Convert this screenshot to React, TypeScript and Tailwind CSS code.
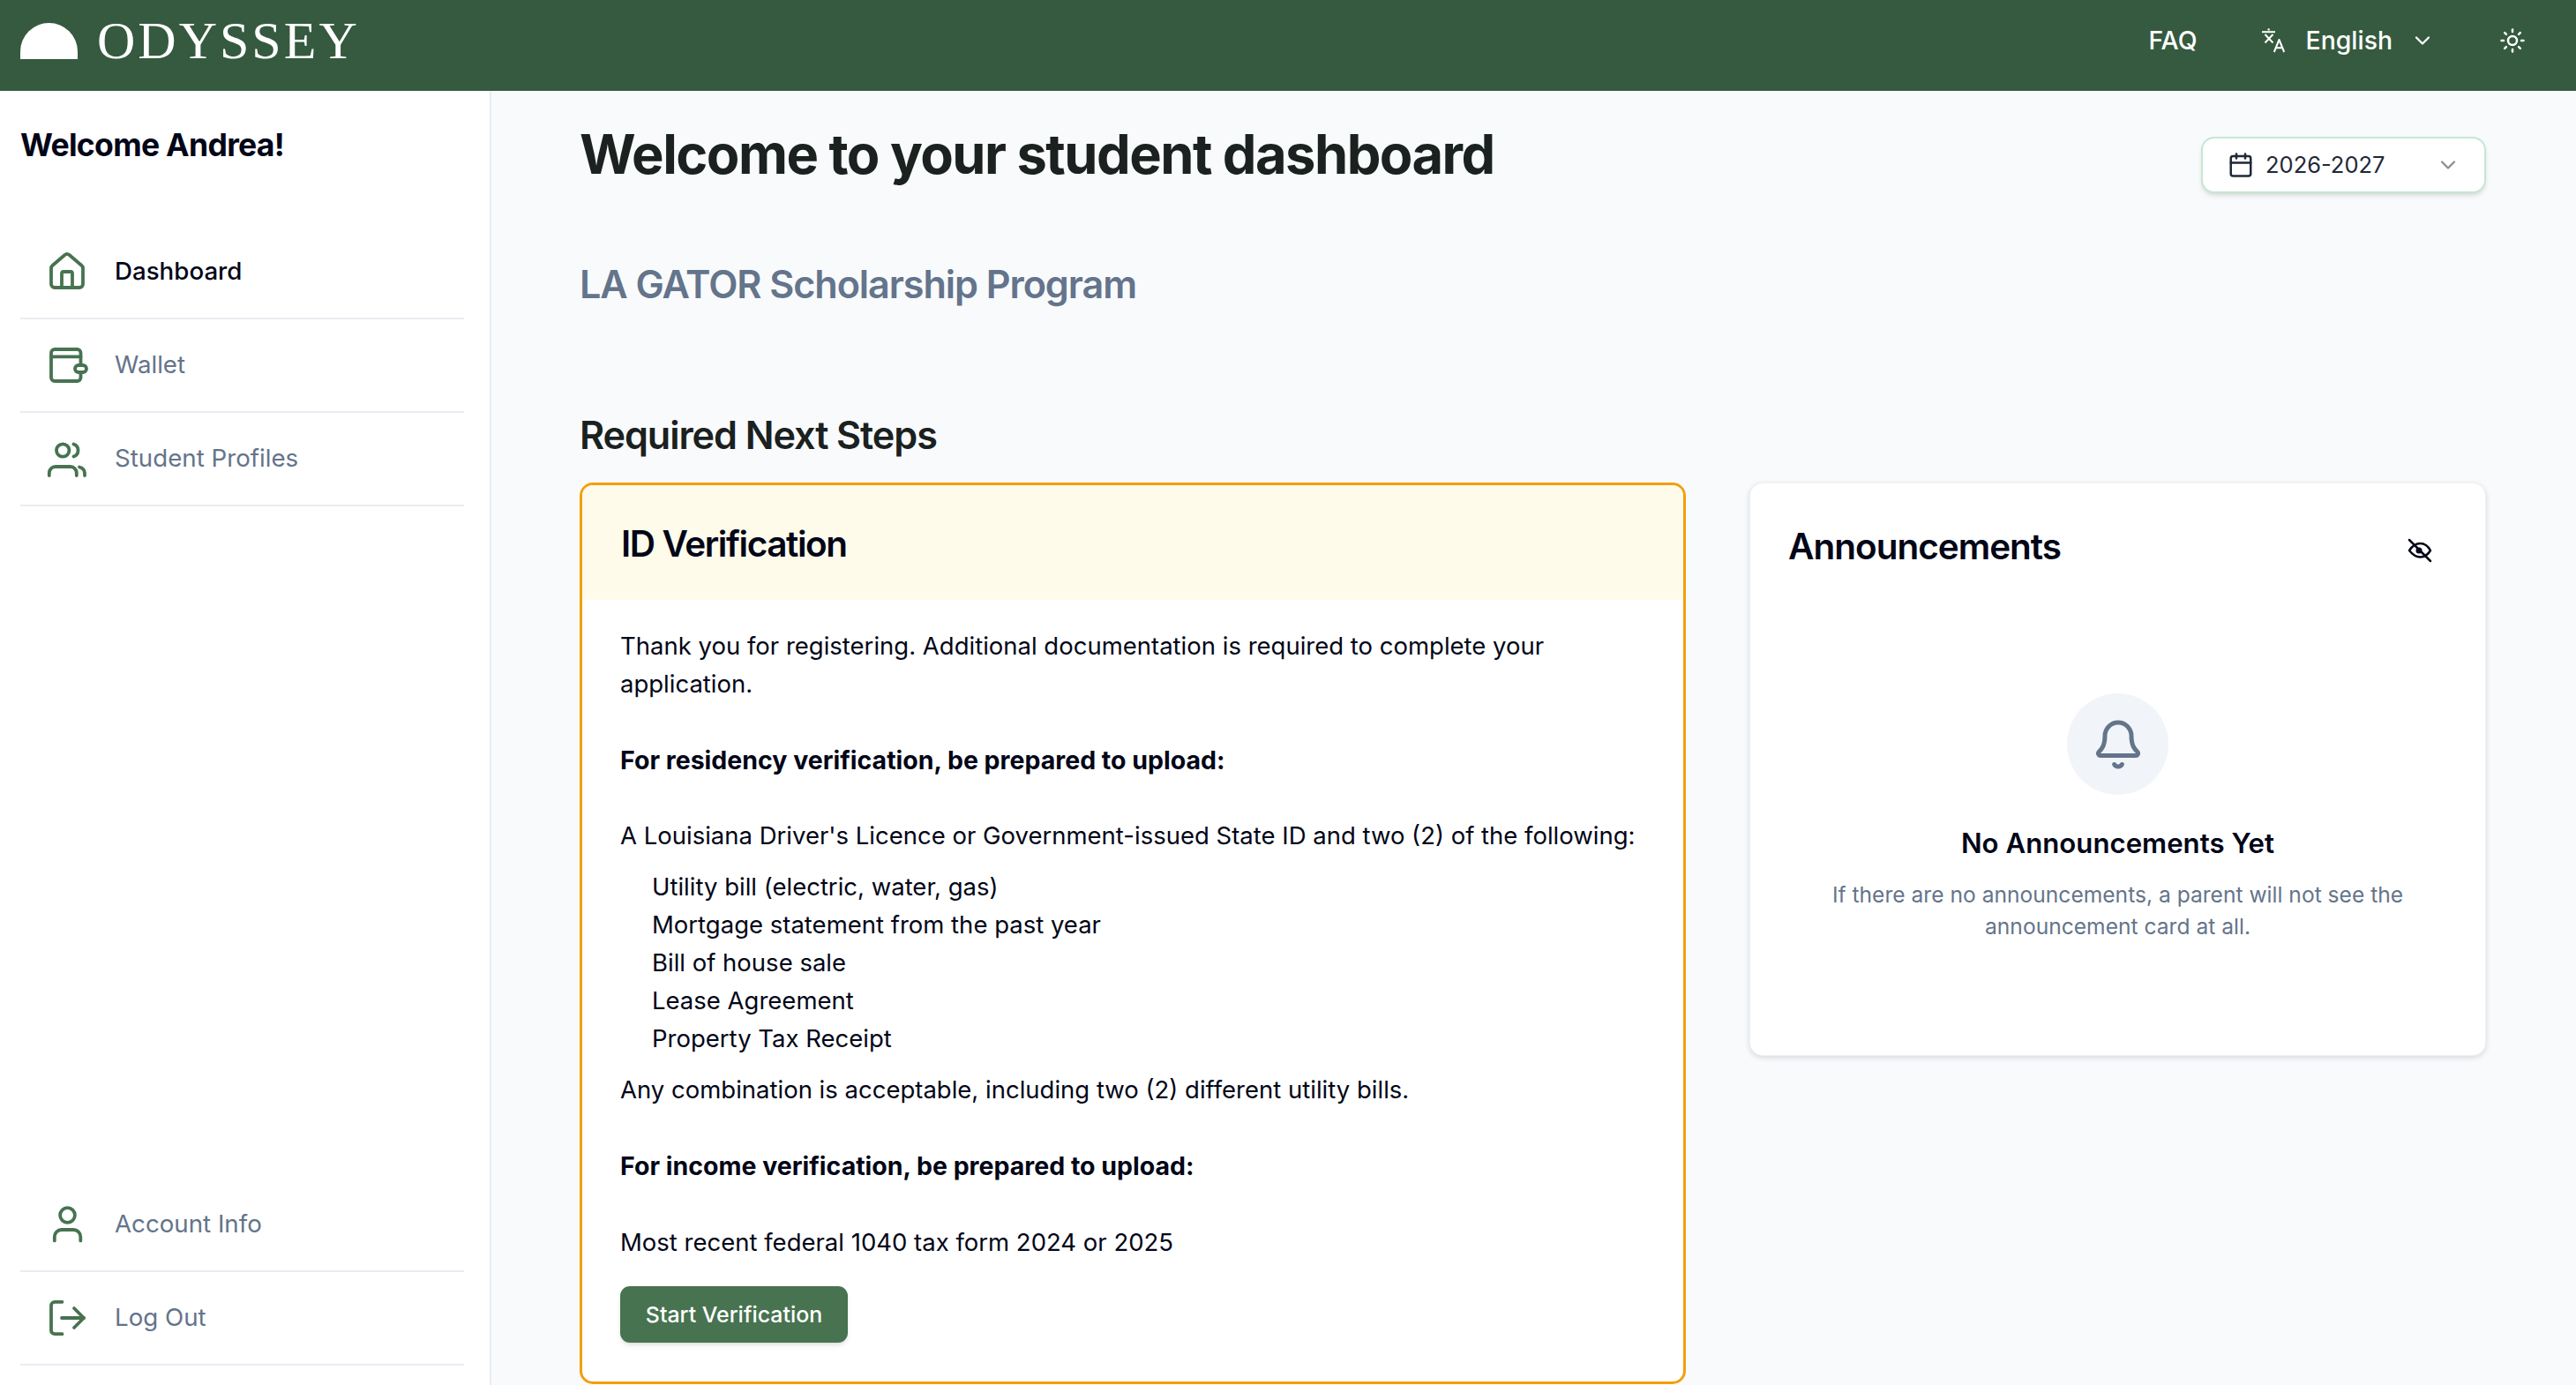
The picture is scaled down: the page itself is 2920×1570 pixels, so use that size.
import React from 'react';
import { House, Calendar, ChevronDown, Sun, Bell } from 'lucide-react';

const iconProps = {
  width: 48,
  height: 48,
  viewBox: '0 0 48 48',
  fill: 'none',
  stroke: '#477350',
  strokeWidth: 3.8,
  strokeLinecap: 'round' as const,
  strokeLinejoin: 'round' as const,
};

const WalletIcon = () => (
  <svg {...iconProps}>
    <path d="M39.5 23V10a4 4 0 0 0-4-4H10a4 4 0 0 0-4 4v28a4 4 0 0 0 4 4h25.5a4 4 0 0 0 4-4v-5" />
    <path d="M6 14.4h33.5" />
    <rect x="33" y="24" width="13" height="8" rx="4" />
  </svg>
);

const UsersIcon = () => (
  <svg {...iconProps}>
    <circle cx="19.2" cy="14.5" r="7.2" />
    <path d="M3.8 43v-3a7 7 0 0 1 7-7h17a7 7 0 0 1 7 7v3" />
    <path d="M31.5 7.5c3 1 5 4 5 7s-2 6-5 7" />
    <path d="M38 33.5c3 .8 6 3 6 7v2.5" />
  </svg>
);

const UserIcon = () => (
  <svg {...iconProps}>
    <circle cx="24.5" cy="13.5" r="8.4" />
    <path d="M9.8 42.4V38a8 8 0 0 1 8-8h13.5a8 8 0 0 1 8 8v4.4" />
  </svg>
);

const LogOutIcon = () => (
  <svg {...iconProps}>
    <path d="M18.5 5.8H10a4 4 0 0 0-4 4v28.4a4 4 0 0 0 4 4h8.5" />
    <path d="M18 24h25" />
    <path d="M32 13l11 11-11 11" />
  </svg>
);

const TranslateIcon = () => (
  <svg width="28" height="28" viewBox="0 0 28 28" fill="none" stroke="#fff" strokeWidth="2" strokeLinejoin="round">
    <path d="M1 4.2h15" />
    <circle cx="8.7" cy="1.4" r="1.2" fill="#fff" stroke="none" />
    <path d="M4.5 7l9 9.5M13.5 7l-9 9.5" />
    <path d="M14.8 27l5.7-14 5.7 14M16.8 22.3h7.4" />
  </svg>
);

const EyeHiddenIcon = () => (
  <svg width="28" height="28" viewBox="0 0 28 28" fill="none" stroke="#020617" strokeWidth="2.5" strokeLinecap="round" strokeLinejoin="round">
    <path d="M2 14C6 8 10 6 14.5 6S23 8.5 26 14c-3 5-7 7.5-11.5 7.5S6 19 2 14Z" />
    <circle cx="13" cy="14" r="3.5" fill="#020617" stroke="none" />
    <path d="M2 2l24 24" />
  </svg>
);

const NavRow = ({ icon, label, active }: { icon: React.ReactNode; label: string; active?: boolean }) => (
  <div className="flex items-center h-[106px] border-b-2 border-[#e8edf3] pl-[29px]">
    <div className="w-[48px] h-[48px] shrink-0">{icon}</div>
    <span className={`ml-[30px] text-[27.7px] ${active ? 'font-medium text-[#020617]' : 'text-[#64748b]'}`}>{label}</span>
  </div>
);

const Steps = () => (
  <div className="w-[1254px] h-[1022px] shrink-0 bg-white border-[3px] border-[#f59e0b] rounded-[15px] overflow-hidden">
    <div className="h-[130px] bg-[#fffbeb] pl-[44px] pt-[5px] flex items-center">
      <h3 className="text-[40.5px] font-semibold tracking-[-0.035em] text-[#020617]">ID Verification</h3>
    </div>
    <div className="px-[43px] pt-[31px] text-[27.5px] leading-[43px] text-[#020617]">
      <p className="mb-[43px]">
        Thank you for registering. Additional documentation is required to complete your application.
      </p>
      <p className="mb-[43px] text-[28.5px] font-bold">For residency verification, be prepared to upload:</p>
      <p className="mb-[15px]">A Louisiana Driver's Licence or Government-issued State ID and two (2) of the following:</p>
      <ul className="pl-[36px] mb-[15px]">
        <li>Utility bill (electric, water, gas)</li>
        <li>Mortgage statement from the past year</li>
        <li>Bill of house sale</li>
        <li>Lease Agreement</li>
        <li>Property Tax Receipt</li>
      </ul>
      <p className="mb-[43px]">Any combination is acceptable, including two (2) different utility bills.</p>
      <p className="mb-[44px] text-[28.5px] font-bold">For income verification, be prepared to upload:</p>
      <p className="mb-[28px]">Most recent federal 1040 tax form 2024 or 2025</p>
      <button className="w-[258px] h-[64px] bg-[#477350] text-white text-[24.9px] font-medium rounded-[11px] shadow-md">
        Start Verification
      </button>
    </div>
  </div>
);

const Announcements = () => (
  <div className="w-[835px] h-[650px] shrink-0 bg-white rounded-[15px] shadow-[0_2px_6px_rgba(15,23,42,0.14)] border border-[#eef2f6] px-[43px]">
    <div className="flex items-center justify-between pt-[44px] pr-[17px]">
      <h3 className="text-[40.5px] leading-[56px] font-semibold tracking-[-0.025em] text-[#020617]">Announcements</h3>
      <span className="mt-[8px]"><EyeHiddenIcon /></span>
    </div>
    <div className="flex flex-col items-center mt-[138px]">
      <div className="w-[115px] h-[115px] rounded-full bg-[#f1f5f9] flex items-center justify-center">
        <Bell size={60} color="#64748b" strokeWidth={2} />
      </div>
      <h4 className="mt-[35px] text-[31.2px] leading-[40px] font-semibold text-[#020617]">No Announcements Yet</h4>
      <p className="mt-[20px] w-[680px] text-center text-[24.6px] leading-[36px] text-[#64748b]">
        If there are no announcements, a parent will not see the announcement card at all.
      </p>
    </div>
  </div>
);

export default function App() {
  return (
    <div className="w-[2920px] h-[1570px] overflow-hidden flex flex-col bg-[#f8fafc] font-['Inter',sans-serif]">
      <header className="h-[103px] shrink-0 bg-[#355a3f] flex items-center pb-[11px] text-white">
        <div className="flex items-center ml-[23px]">
          <svg width="65" height="41" viewBox="0 0 65 41" fill="#fff">
            <path d="M0 41v-8.5A32.5 32.5 0 0 1 65 32.5V41Z" />
          </svg>
          <span className="ml-[22px] font-['Liberation_Serif',serif] text-[60px] leading-[41px] tracking-[3px]">ODYSSEY</span>
        </div>
        <div className="ml-auto flex items-center text-[28.4px] font-medium">
          <span>FAQ</span>
          <span className="ml-[72px]"><TranslateIcon /></span>
          <span className="ml-[23px]">English</span>
          <ChevronDown className="ml-[20px]" size={28} strokeWidth={2} />
          <Sun className="ml-[73px] mr-[57px]" size={30} strokeWidth={2} />
        </div>
      </header>

      <div className="flex flex-1 min-h-0">
        <aside className="w-[557px] shrink-0 bg-white border-r-2 border-[#e8edf3] flex flex-col pl-[23px] pr-[29px] pb-[22px]">
          <h2 className="mt-[39px] h-[46px] leading-[46px] text-[35.6px] font-bold tracking-[-0.02em] text-[#020617]">Welcome Andrea!</h2>
          <nav className="mt-[68px]">
            <NavRow icon={<House size={48} color="#477350" strokeWidth={1.9} />} label="Dashboard" active />
            <NavRow icon={<WalletIcon />} label="Wallet" />
            <NavRow icon={<UsersIcon />} label="Student Profiles" />
          </nav>
          <div className="mt-auto">
            <NavRow icon={<UserIcon />} label="Account Info" />
            <NavRow icon={<LogOutIcon />} label="Log Out" />
          </div>
        </aside>

        <main className="flex-1 pl-[100px] pr-[102px]">
          <div className="flex justify-between items-start">
            <h1 className="mt-[30px] text-[61.4px] leading-[84px] font-bold tracking-[-0.025em] text-[#1a211f]">
              Welcome to your student dashboard
            </h1>
            <div className="mt-[52px] w-[323px] h-[64px] flex items-center bg-white border-2 border-[#c6e8d0] rounded-[15px] shadow-md pl-[28px] text-[25.5px] text-[#1f2937]">
              <Calendar size={30} strokeWidth={2} />
              <span className="ml-[13px]">2026-2027</span>
              <ChevronDown className="ml-auto mr-[27px] text-[#8b8f96]" size={28} strokeWidth={2} />
            </div>
          </div>
          <h2 className="mt-[75px] text-[43.2px] leading-[56px] font-semibold tracking-[-0.025em] text-[#64748b]">
            LA GATOR Scholarship Program
          </h2>
          <h2 className="mt-[115px] text-[43.2px] leading-[56px] font-semibold tracking-[-0.025em] text-[#1a211f]">
            Required Next Steps
          </h2>
          <div className="mt-[26px] flex gap-[72px] items-start">
            <Steps />
            <Announcements />
          </div>
        </main>
      </div>
    </div>
  );
}
